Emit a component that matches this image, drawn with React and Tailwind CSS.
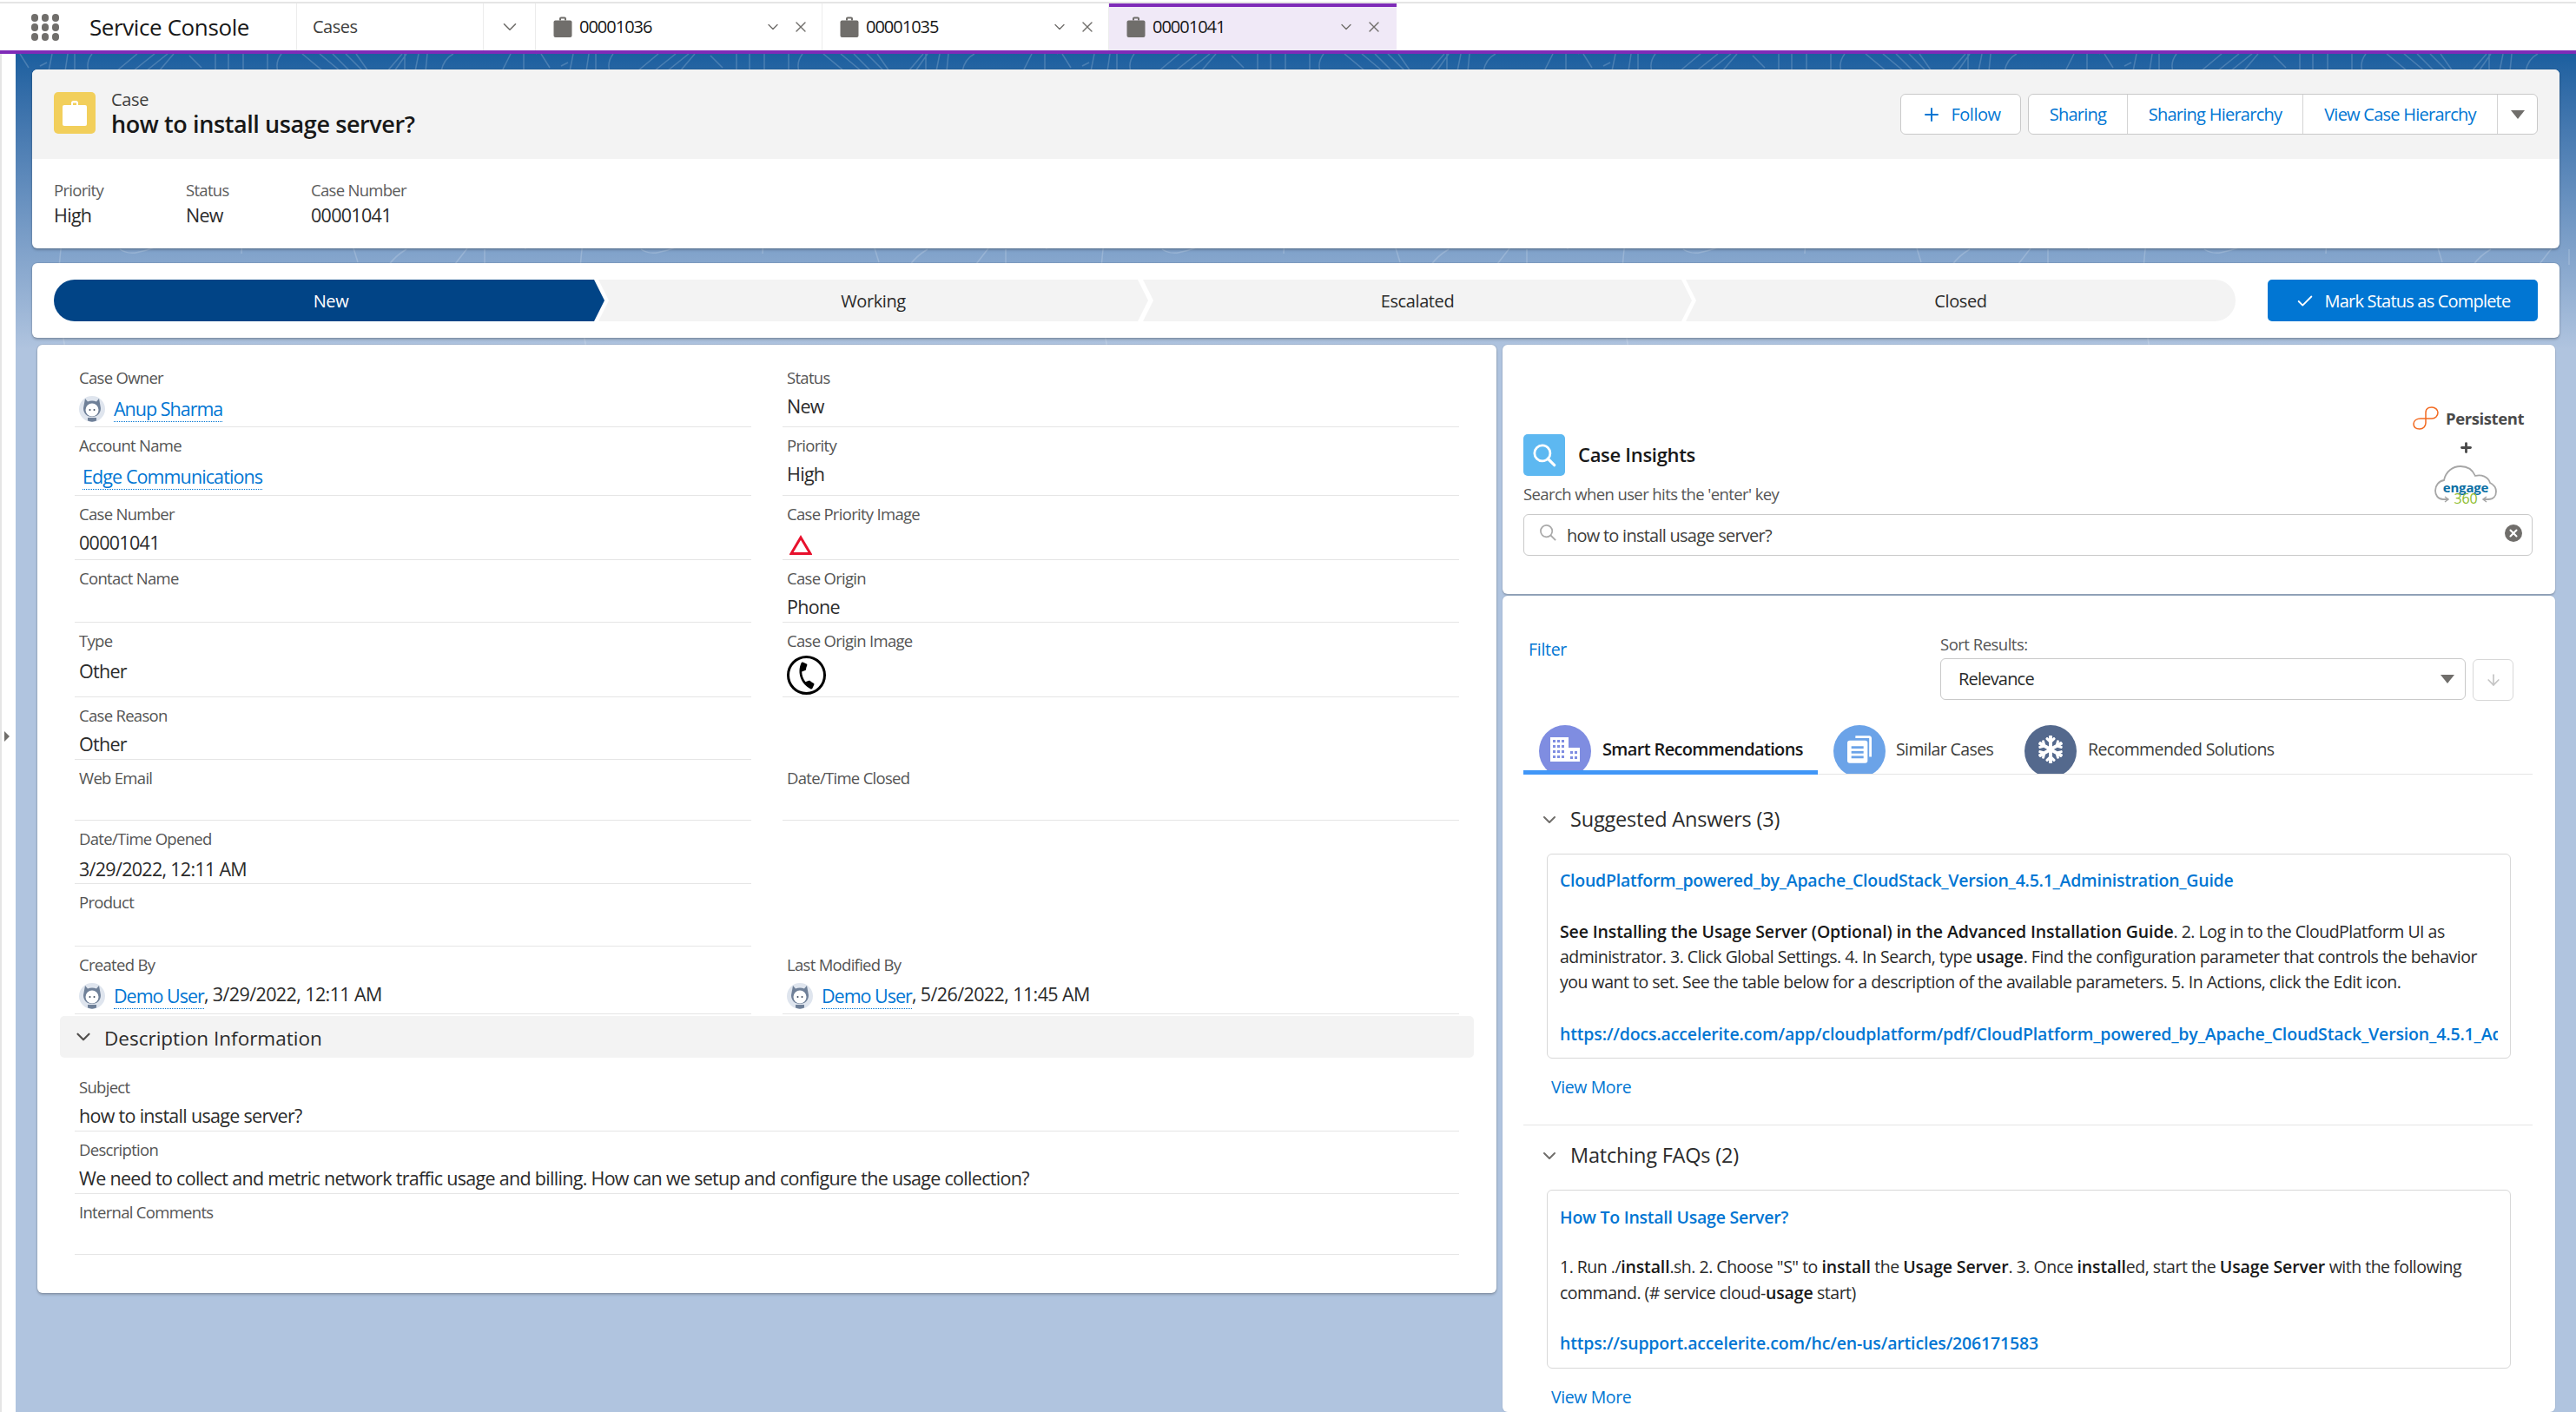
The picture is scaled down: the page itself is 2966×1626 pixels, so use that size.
import React from "react";
import { ArrowDown, Check, ChevronDown, Plus, X } from "lucide-react";
import { FaSnowflake } from "react-icons/fa";
import { MdPhone } from "react-icons/md";

// contour lines of the page backdrop, one 600px wide tile
const LINES = [
  "M5 0l10 16 M28 14l8-4 M42 0l-4 20 M60 0l-3 20c-5 60 10 110 0 170s-10 90 0 150 M68 0v20 M88 0c-6 8-6 14-4 20",
  "M116 20L140 0 M135 20L160 0 M150 20L175 0 M165 20L182 0 M120 225c15 10 30 0 50-5",
  "M200 2l14 14 M230 0v20c8 60-10 120 4 200 M245 0v20 M262 0v20c-8 50 6 110-2 210 M290 0v20 M306 0c-6 8-6 14-4 20",
  "M330 0l24 20c30 60 10 130 40 220 M350 0l24 20 M365 0l20 20 M380 0l20 20 M392 0l14 20",
  "M428 20L445 0 M436 20l14-20 M448 20v-20 M460 20l4-20 M472 20l2-20 M490 20c2-10 6-16 14-20 M450 225c-10 6-16 12-20 18",
  "M560 20L570 0 M585 0v20c6 60-8 130 2 205 M600 0l16 16 M630 12l6-4 M520 224l-14 18 M540 225v18",
];

function Backdrop() {
  return (
    <div className="absolute left-0 right-0 top-0 h-[340px] bg-linear-to-b from-[#1b5f9f] to-[#b0c4df]">
      <svg className="w-full h-full" fill="none">
        <defs>
          <pattern id="topo" width="600" height="340" patternUnits="userSpaceOnUse">
            {LINES.map((d, i) => (
              <path key={i} d={d} stroke="#ffffff" strokeOpacity="0.18" strokeWidth="1.5" />
            ))}
          </pattern>
        </defs>
        <rect width="100%" height="100%" fill="url(#topo)" />
      </svg>
    </div>
  );
}

function CaseGlyph({ className }) {
  return (
    <svg viewBox="0 0 22 24" className={className}>
      <path d="M7 4.5V2.5C7 1.3 8 .5 9 .5h4c1 0 2 .8 2 2v2h-2V2.5H9v2z" fill="currentColor" />
      <rect x="0.5" y="4.5" width="21" height="19.5" rx="2" fill="currentColor" />
    </svg>
  );
}

function ConsoleTab({ label, active }) {
  return (
    <div
      className={
        active
          ? "w-[331px] h-[54px] flex items-center pl-[20px] pb-[4px] bg-[#f0e9f7] border-t-[4px] border-[#7f2bb8]"
          : "w-[330px] h-[54px] flex items-center pl-[20px] border-r border-[#ececec]"
      }
    >
      <CaseGlyph className="w-[22px] h-[24px] text-[#706e6b]" />
      <span className="ml-[8px] text-[20px] tracking-[-1px] text-[#181818] w-[213px]">{label}</span>
      <ChevronDown className="w-[20px] h-[20px] text-[#706e6b]" strokeWidth={1.6} />
      <X className="ml-[12px] w-[20px] h-[20px] text-[#706e6b]" strokeWidth={1.6} />
    </div>
  );
}

function TopBar() {
  return (
    <div className="relative z-10 bg-white">
      <div className="h-[4px] border-b-[2px] border-[#e5e5e5]" />
      <div className="h-[54px] flex">
        <div className="w-[342px] flex items-center pl-[36px] border-r border-[#ececec]">
          <div className="grid grid-cols-3 gap-x-[4px] gap-y-[2px] w-[32px]">
            {[...Array(9)].map((_, i) => (
              <span key={i} className="w-[8px] h-[9px] rounded-full bg-[#706e6b]" />
            ))}
          </div>
          <span className="ml-[35px] text-[26px] tracking-[-0.4px] text-[#181818]">Service Console</span>
        </div>
        <div className="w-[215px] flex items-center pl-[18px] border-r border-[#ececec]">
          <span className="text-[20px] tracking-[-0.5px] text-[#3e3e3c]">Cases</span>
        </div>
        <div className="w-[60px] flex items-center justify-center border-r border-[#ececec]">
          <ChevronDown className="w-[26px] h-[26px] text-[#706e6b]" strokeWidth={1.5} />
        </div>
        <ConsoleTab label="00001036" />
        <ConsoleTab label="00001035" />
        <ConsoleTab label="00001041" active />
      </div>
      <div className="h-[4px] bg-[#7f2bb8]" />
    </div>
  );
}

function HeaderStat({ label, value, className }) {
  return (
    <div className={className}>
      <div className="text-[18.5px] leading-[24px] tracking-[-0.7px] text-[#5c5c5c]">{label}</div>
      <div className="mt-[3px] text-[21.5px] leading-[28px] tracking-[-0.7px] text-[#2b2b2b]">{value}</div>
    </div>
  );
}

function GroupButton({ children, className }) {
  return (
    <div className={`h-full flex items-center justify-center text-[20px] tracking-[-0.75px] text-[#0176d3] ${className}`}>
      {children}
    </div>
  );
}

function CaseHeader() {
  return (
    <div className="rounded-[6px] overflow-hidden bg-white shadow-[0_0_0_1px_rgba(0,0,0,0.06),0_2px_3px_rgba(0,0,0,0.22)]">
      <div className="h-[103px] bg-[#f3f3f3] flex items-center pl-[25px] pr-[25px]">
        <div className="w-[48px] h-[48px] -mt-[3px] rounded-[5px] bg-[#f2cf5b] flex items-center justify-center">
          <svg viewBox="0 0 30 30" className="w-[30px] h-[30px]">
            <path d="M11 6V3.5C11 2 12 1 13.500 1h3C18 1 19 2 19 3.5V6h-2V3.500h-4V6z" fill="#ffffff" />
            <rect x="1" y="6" width="28" height="24" rx="2" fill="#ffffff" />
          </svg>
        </div>
        <div className="ml-[18px] -mt-[1px]">
          <div className="text-[20px] leading-[22px] tracking-[-0.3px] text-[#3e3e3c]">Case</div>
          <div className="mt-[1px] text-[27px] leading-[32px] font-semibold tracking-[-0.4px] text-[#181818]">
            how to install usage server?
          </div>
        </div>
        <div className="ml-auto flex h-[47px]">
          <div className="w-[139px] rounded-[6px] border border-[#c9c9c9] bg-white flex items-center justify-center gap-[11px] text-[20px] tracking-[-0.5px] text-[#0176d3]">
            <Plus className="w-[24px] h-[24px]" strokeWidth={2} />
            Follow
          </div>
          <div className="ml-[8px] w-[587px] flex rounded-[6px] border border-[#c9c9c9] bg-white">
            <GroupButton className="w-[114px] border-r border-[#d4d4d4]">Sharing</GroupButton>
            <GroupButton className="w-[202px] border-r border-[#d4d4d4]">Sharing Hierarchy</GroupButton>
            <GroupButton className="w-[224px] border-r border-[#d4d4d4]">View Case Hierarchy</GroupButton>
            <div className="flex-1 flex items-center justify-center">
              <span className="w-0 h-0 border-l-[8px] border-r-[8px] border-t-[10px] border-l-transparent border-r-transparent border-t-[#706e6b]" />
            </div>
          </div>
        </div>
      </div>
      <div className="h-[103px] flex pl-[25px] pt-[24px]">
        <HeaderStat label="Priority" value="High" className="w-[152px]" />
        <HeaderStat label="Status" value="New" className="w-[144px]" />
        <HeaderStat label="Case Number" value="00001041" />
      </div>
    </div>
  );
}

function StatusPath() {
  return (
    <div className="mt-[17px] h-[86px] rounded-[6px] bg-white flex items-center pl-[25px] pr-[25px] shadow-[0_0_0_1px_rgba(0,0,0,0.06),0_2px_3px_rgba(0,0,0,0.22)]">
      <div className="flex w-[2512px] h-[48px] text-[20px] tracking-[-0.4px]">
        <div className="w-[634px] pl-[4px] pt-[2px] flex items-center justify-center text-white bg-[#014486] rounded-l-full [clip-path:polygon(0_0,622px_0,634px_50%,622px_100%,0_100%)]">
          New
        </div>
        <div className="-ml-[7px] w-[633px] pt-[2px] flex items-center justify-center text-[#2b2b2b] bg-[#f3f3f3] [clip-path:polygon(0_0,621px_0,633px_50%,621px_100%,0_100%,12px_50%)]">
          Working
        </div>
        <div className="-ml-[6px] w-[632px] pt-[2px] flex items-center justify-center text-[#2b2b2b] bg-[#f3f3f3] [clip-path:polygon(0_0,620px_0,632px_50%,620px_100%,0_100%,12px_50%)]">
          Escalated
        </div>
        <div className="-ml-[7px] w-[633px] pt-[2px] flex items-center justify-center text-[#2b2b2b] bg-[#f3f3f3] rounded-r-full [clip-path:polygon(0_0,100%_0,100%_100%,0_100%,12px_50%)]">
          Closed
        </div>
      </div>
      <div className="ml-[37px] w-[311px] h-[48px] pt-[2px] rounded-[5px] bg-[#0176d3] flex items-center justify-center gap-[12px] text-[20px] tracking-[-0.8px] text-white">
        <Check className="w-[22px] h-[22px]" strokeWidth={2} />
        Mark Status as Complete
      </div>
    </div>
  );
}

function Avatar() {
  return (
    <svg viewBox="0 0 30 30" className="w-[30px] h-[30px] shrink-0">
      <circle cx="15" cy="15" r="15" fill="#dfe5ee" />
      <path d="M7 3l3 3.500c3-1.500 7-1.500 10 0L23 3l2 11c0 6-4 10-10 10S5 20 5 14z" fill="#6f8098" />
      <circle cx="15" cy="16" r="7.500" fill="#ffffff" />
      <circle cx="12.500" cy="16" r="1" fill="#3e4a5c" />
      <circle cx="17.500" cy="16" r="1" fill="#3e4a5c" />
      <path d="M10 25h10v3.500c-3 1.500-7 1.500-10 0z" fill="#6f8098" />
    </svg>
  );
}

function Field({ label, className, children }) {
  return (
    <div className={`border-b-[1.5px] border-[#e5e5e5] pl-[5px] pt-[9px] ${className}`}>
      <div className="text-[18.5px] leading-[24px] tracking-[-0.7px] text-[#555555]">{label}</div>
      {children}
    </div>
  );
}

function Value({ children }) {
  return <div className="mt-[6px] text-[21.5px] leading-[30px] tracking-[-0.7px] text-[#2b2b2b]">{children}</div>;
}

function UserLink({ name, after }) {
  return (
    <div className="mt-[9px] flex items-start text-[21.5px] leading-[30px] tracking-[-0.6px] text-[#2b2b2b]">
      <Avatar />
      <span className="ml-[10px] tracking-[-1px] text-[#0176d3] border-b border-dotted border-[#0176d3] leading-[29px]">{name}</span>
      {after && <span className="-mt-[2px]">{after}</span>}
    </div>
  );
}

function PhoneBadge() {
  return (
    <div className="mt-[5px] w-[45px] h-[45px] rounded-full border-[3px] border-black flex items-center justify-center">
      <MdPhone className="w-[32px] h-[32px] text-black rotate-[25deg]" />
    </div>
  );
}

function CaseDetails() {
  return (
    <div className="self-start w-[1680px] shrink-0 rounded-[6px] bg-white pt-[17px] pb-[44px] shadow-[0_0_0_1px_rgba(0,0,0,0.06),0_2px_3px_rgba(0,0,0,0.22)]">
      <div className="mx-[43px] grid grid-cols-2 gap-x-[36px]">
        <Field label="Case Owner" className="h-[78px]">
          <UserLink name="Anup Sharma" />
        </Field>
        <Field label="Status" className="h-[78px]"><Value>New</Value></Field>
        <Field label="Account Name" className="h-[79px]">
          <div className="mt-[10px] ml-[4px] w-fit text-[21.5px] leading-[28px] tracking-[-0.9px] text-[#0176d3] border-b border-dotted border-[#0176d3]">
            Edge Communications
          </div>
        </Field>
        <Field label="Priority" className="h-[79px]"><Value>High</Value></Field>
        <Field label="Case Number" className="h-[74px]"><Value>00001041</Value></Field>
        <Field label="Case Priority Image" className="h-[74px]">
          <svg viewBox="0 0 26 23" className="mt-[12px] ml-[3px] w-[26px] h-[23px]">
            <path d="M13 3L24 21.500H2z" fill="none" stroke="#e8112d" strokeWidth="3" />
          </svg>
        </Field>
        <Field label="Contact Name" className="h-[72px]" />
        <Field label="Case Origin" className="h-[72px]"><Value>Phone</Value></Field>
        <Field label="Type" className="h-[86px]"><div className="pt-[2px]"><Value>Other</Value></div></Field>
        <Field label="Case Origin Image" className="h-[86px]"><PhoneBadge /></Field>
        <Field label="Case Reason" className="h-[72px]"><Value>Other</Value></Field>
        <div className="h-[72px]" />
        <Field label="Web Email" className="h-[70px]" />
        <Field label="Date/Time Closed" className="h-[70px]" />
        <Field label="Date/Time Opened" className="h-[73px]"><div className="pt-[2px]"><Value>3/29/2022, 12:11 AM</Value></div></Field>
        <div className="h-[73px]" />
        <Field label="Product" className="h-[72px]" />
        <div className="h-[72px]" />
        <Field label="Created By" className="h-[78px]">
          <UserLink name="Demo User" after=", 3/29/2022, 12:11 AM" />
        </Field>
        <Field label="Last Modified By" className="h-[78px]">
          <UserLink name="Demo User" after=", 5/26/2022, 11:45 AM" />
        </Field>
      </div>
      <div className="mt-[2px] mx-[26px] h-[48px] rounded-[5px] bg-[#f3f3f3] flex items-center pl-[14px]">
        <ChevronDown className="w-[26px] h-[26px] text-[#514f4d]" strokeWidth={2} />
        <span className="ml-[11px] pt-[4px] text-[22.5px] tracking-[0px] text-[#2b2b2b]">Description Information</span>
      </div>
      <div className="mx-[43px] mt-[13px]">
        <Field label="Subject" className="h-[72px]"><Value>how to install usage server?</Value></Field>
        <Field label="Description" className="h-[72px]">
          <Value>We need to collect and metric network traffic usage and billing. How can we setup and configure the usage collection?</Value>
        </Field>
        <Field label="Internal Comments" className="h-[70px]" />
      </div>
    </div>
  );
}

function VendorLogos() {
  return (
    <div className="mr-[10px] w-[128px] flex flex-col items-center">
      <div className="flex items-center h-[27px] self-start">
        <svg viewBox="0 0 30 27" className="w-[30px] h-[27px]" fill="none">
          <path
            d="M15 19V7C15 3 18 1 22 1c4 0 7 3 7 6 0 4-3 7-7 7H9c-4 0-8 2-8 6s3 6 7 6 7-3 7-7"
            stroke="#f26a21"
            strokeWidth="1.500"
          />
        </svg>
        <span className="ml-[8px] text-[18.5px] font-bold tracking-[-0.4px] text-[#4a4a4a]">Persistent</span>
      </div>
      <Plus className="mt-[12px] -ml-[6px] w-[17px] h-[17px] text-[#4a4a4a]" strokeWidth={4} />
      <div className="relative mt-[12px] -ml-[6px] w-[72px] h-[44px]">
        <svg viewBox="0 0 72 44" className="absolute inset-0 w-[72px] h-[44px]" fill="none">
          <path
            d="M16 39H10C4 39 1 34 1 29c0-6 4-11 10-12C13 7 21 1 30 1c8 0 14 4 17 11 7-2 15 1 17 8 4 2 7 5 7 10 0 5-3 9-9 9h-6"
            stroke="#a6a6a6"
            strokeWidth="1.800"
          />
          <path d="M12 36l4 3-4 3 M60 36l-4 3 4 3" stroke="#a6a6a6" strokeWidth="1.500" />
        </svg>
        <div className="absolute left-0 right-0 top-[16px] text-center text-[15px] leading-[18px] font-bold tracking-[-0.2px] text-[#0b6fa4]">
          engage
        </div>
        <div className="absolute left-0 right-0 top-[30px] text-center text-[16px] leading-[16px] tracking-[-0.2px] text-[#8bbb2a]">
          360
        </div>
      </div>
    </div>
  );
}

function InsightsSearch() {
  return (
    <div className="h-[287px] rounded-[6px] bg-white pl-[24px] pr-[26px] pt-[71px] shadow-[0_0_0_1px_rgba(0,0,0,0.04),0_2px_2px_rgba(0,0,0,0.16)]">
      <div className="h-[112px] flex justify-between items-end">
        <div>
          <div className="flex items-center">
            <div className="w-[48px] h-[48px] rounded-[5px] bg-[#5db8f1] flex items-center justify-center">
              <svg viewBox="0 0 32 32" className="w-[34px] h-[34px]" fill="none">
                <circle cx="14" cy="14" r="8.500" stroke="#ffffff" strokeWidth="2.600" />
                <path d="M20 20l7 7" stroke="#ffffff" strokeWidth="3" strokeLinecap="round" />
              </svg>
            </div>
            <span className="ml-[15px] -mt-[2px] text-[22px] font-semibold tracking-[-0.3px] text-[#181818]">Case Insights</span>
          </div>
          <div className="mt-[9px] -mb-[1px] text-[18.5px] leading-[24px] tracking-[-0.6px] text-[#555555]">
            Search when user hits the 'enter' key
          </div>
        </div>
        <VendorLogos />
      </div>
      <div className="mt-[12px] h-[48px] rounded-[6px] border border-[#c9c9c9] flex items-center pl-[17px] pr-[11px]">
        <svg viewBox="0 0 22 22" className="w-[21px] h-[21px] -mt-[6px]" fill="none">
          <circle cx="9" cy="9" r="7" stroke="#a9a9a9" strokeWidth="1.800" />
          <path d="M14 14l6 6" stroke="#a9a9a9" strokeWidth="2" />
        </svg>
        <span className="ml-[11px] pt-[2px] text-[20px] tracking-[-0.75px] text-[#3e3e3c]">how to install usage server?</span>
        <span className="ml-auto w-[20px] h-[20px] rounded-full bg-[#706e6b] flex items-center justify-center -mt-[4px]">
          <X className="w-[14px] h-[14px] text-white" strokeWidth={3.5} />
        </span>
      </div>
    </div>
  );
}

function TabCircle({ className, children }) {
  return (
    <div className={`w-[60px] h-[60px] rounded-full flex items-center justify-center shrink-0 pb-[4px] ${className}`}>
      {children}
    </div>
  );
}

function RecommendationTabs() {
  return (
    <div className="mt-[28px] h-[57px] flex border-b-[1.5px] border-[#e5e5e5]">
      <div className="w-[339px] h-[57px] pl-[18px] flex overflow-hidden border-b-[5px] border-[#4096f7] shrink-0">
        <TabCircle className="bg-[#7f8de1]">
          <svg viewBox="0 0 34 28" className="w-[34px] h-[28px]">
            <rect x="0" y="0" width="21" height="28" fill="#ffffff" />
            <rect x="19" y="12" width="15" height="16" fill="#ffffff" />
            {[3, 8, 13].flatMap((x) =>
              [3, 9, 15, 21].map((y) => <rect key={`${x}-${y}`} x={x} y={y} width="3" height="3" fill="#7f8de1" />)
            )}
            {[23, 28].flatMap((x) =>
              [16, 22].map((y) => <rect key={`${x}-${y}`} x={x} y={y} width="3" height="3" fill="#7f8de1" />)
            )}
          </svg>
        </TabCircle>
        <span className="ml-[13px] mt-[14px] text-[20px] leading-[28px] font-semibold tracking-[-0.65px] text-[#181818]">
          Smart Recommendations
        </span>
      </div>
      <div className="w-[220px] pl-[18px] flex overflow-hidden">
        <TabCircle className="bg-[#6ba3e8]">
          <svg viewBox="0 0 30 34" className="w-[28px] h-[32px]">
            <path d="M10 0h17c1.500 0 3 1.500 3 3v23h-3V3H10z" fill="#ffffff" />
            <rect x="0" y="6" width="25" height="28" rx="3" fill="#ffffff" />
            <rect x="5" y="13" width="15" height="3" fill="#6ba3e8" />
            <rect x="5" y="19" width="15" height="3" fill="#6ba3e8" />
            <rect x="5" y="25" width="15" height="3" fill="#6ba3e8" />
          </svg>
        </TabCircle>
        <span className="ml-[12px] mt-[14px] text-[19.500px] leading-[28px] tracking-[-0.6px] text-[#3e3e3c]">Similar Cases</span>
      </div>
      <div className="pl-[18px] flex overflow-hidden">
        <TabCircle className="bg-[#54698d]">
          <FaSnowflake className="w-[32px] h-[32px] text-white" />
        </TabCircle>
        <span className="ml-[13px] mt-[14px] text-[19.500px] leading-[28px] tracking-[-0.6px] text-[#3e3e3c]">Recommended Solutions</span>
      </div>
    </div>
  );
}

function SectionTitle({ children }) {
  return (
    <div className="h-[30px] pl-[18px] flex items-center">
      <ChevronDown className="w-[24px] h-[24px] text-[#706e6b]" strokeWidth={2} />
      <span className="ml-[12px] text-[23.5px] tracking-[-0.2px] text-[#2b2b2b]">{children}</span>
    </div>
  );
}

function ResultCard({ className, linkClass, title, link, children }) {
  return (
    <div className={`ml-[27px] mr-[25px] rounded-[6px] border border-[#d8d8d8] px-[14px] ${className}`}>
      <div className="text-[19.500px] leading-[30px] font-semibold tracking-[-0.25px] text-[#0176d3]">{title}</div>
      {children}
      <div className={`text-[19.500px] leading-[30px] font-semibold tracking-[-0.15px] text-[#0176d3] whitespace-nowrap overflow-hidden ${linkClass}`}>
        {link}
      </div>
    </div>
  );
}

function ViewMore() {
  return <div className="ml-[32px] text-[19.500px] leading-[28px] tracking-[-0.4px] text-[#0176d3]">View More</div>;
}

function Strong({ children }) {
  return <b className="font-semibold tracking-[-0.13px] text-[#181818]">{children}</b>;
}

function InsightsResults() {
  return (
    <div className="mt-[2px] flex-1 rounded-[6px] bg-white pl-[24px] pr-[26px] pt-[44px] shadow-[0_0_0_1px_rgba(0,0,0,0.04)]">
      <div className="flex">
        <div className="w-[480px] pl-[6px] pt-[6px] text-[19.500px] leading-[24px] tracking-[-0.3px] text-[#0176d3]">Filter</div>
        <div>
          <div className="text-[18.5px] leading-[24px] tracking-[-0.5px] text-[#555555]">Sort Results:</div>
          <div className="mt-[4px] flex">
            <div className="w-[605px] h-[48px] rounded-[6px] border border-[#c9c9c9] flex items-center pl-[20px] pr-[12px] text-[20px] tracking-[-0.8px] text-[#2b2b2b]">
              Relevance
              <span className="ml-auto w-0 h-0 border-l-[8px] border-r-[8px] border-t-[10px] border-l-transparent border-r-transparent border-t-[#706e6b]" />
            </div>
            <div className="ml-[8px] w-[47px] h-[48px] mt-[1px] rounded-[6px] border border-[#d8d8d8] flex items-center justify-center">
              <ArrowDown className="w-[20px] h-[20px] text-[#c4c4c4]" strokeWidth={2} />
            </div>
          </div>
        </div>
      </div>
      <RecommendationTabs />
      <div className="mt-[37px]">
        <SectionTitle>Suggested Answers (3)</SectionTitle>
      </div>
      <ResultCard
        className="mt-[24px] h-[236px] pt-[15px]"
        linkClass="mt-[31px]"
        title="CloudPlatform_powered_by_Apache_CloudStack_Version_4.5.1_Administration_Guide"
        link="https://docs.accelerite.com/app/cloudplatform/pdf/CloudPlatform_powered_by_Apache_CloudStack_Version_4.5.1_Administration_Guide.pdf"
      >
        <p className="mt-[29px] text-[19.500px] leading-[29px] tracking-[-0.5px] text-[#2b2b2b]">
          <Strong>See Installing the Usage Server (Optional) in the Advanced Installation Guide</Strong>. 2. Log in to the CloudPlatform UI as administrator. 3. Click Global Settings. 4. In Search, type <Strong>usage</Strong>. Find the configuration parameter that controls the behavior you want to set. See the table below for a description of the available parameters. 5. In Actions, click the Edit icon.
        </p>
      </ResultCard>
      <div className="mt-[19px]"><ViewMore /></div>
      <div className="mt-[29px] border-t-[1.5px] border-[#e5e5e5]" />
      <div className="mt-[20px]">
        <SectionTitle>Matching FAQs (2)</SectionTitle>
      </div>
      <ResultCard
        className="mt-[24px] h-[206px] pt-[16px]"
        linkClass="mt-[28px]"
        title="How To Install Usage Server?"
        link="https://support.accelerite.com/hc/en-us/articles/206171583"
      >
        <p className="mt-[27px] text-[19.500px] leading-[30px] tracking-[-0.5px] text-[#2b2b2b]">
          1. Run ./<Strong>install</Strong>.sh. 2. Choose "S" to <Strong>install</Strong> the <Strong>Usage Server</Strong>. 3. Once <Strong>install</Strong>ed, start the <Strong>Usage Server</Strong> with the following command. (# service cloud-<Strong>usage</Strong> start)
        </p>
      </ResultCard>
      <div className="mt-[19px]"><ViewMore /></div>
    </div>
  );
}

export default function App() {
  return (
    <div className="w-[2966px] h-[1626px] overflow-hidden bg-white flex flex-col [font-family:'Open_Sans','Noto_Sans',sans-serif]">
      <TopBar />
      <div className="flex-1 flex min-h-0">
        <div className="w-[18px] shrink-0 border-l-[2px] border-[#e5e5e5] bg-white flex items-center">
          <span className="ml-[3px] mt-[8px] w-0 h-0 border-t-[6px] border-b-[6px] border-l-[6px] border-t-transparent border-b-transparent border-l-[#706e6b]" />
        </div>
        <div className="relative flex-1 min-w-0 bg-[#b0c4df] min-h-0">
          <Backdrop />
          <div className="relative h-full flex flex-col pt-[18px] px-[19px]">
            <CaseHeader />
            <StatusPath />
            <div className="mt-[8px] ml-[6px] mr-[5px] flex-1 min-h-0 flex gap-[7px]">
              <CaseDetails />
              <div className="flex-1 min-w-0 flex flex-col min-h-0">
                <InsightsSearch />
                <InsightsResults />
              </div>
            </div>
          </div>
        </div>
      </div>
    </div>
  );
}
